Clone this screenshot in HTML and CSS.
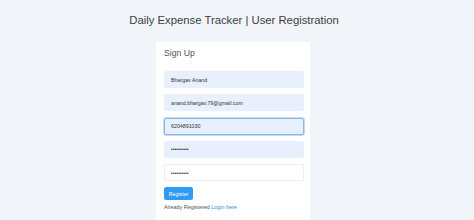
FILE: index.html
```html
<!DOCTYPE html>
<html lang="en">
<head>
  <meta charset="UTF-8">
  <meta name="viewport" content="width=device-width, initial-scale=1.0">
  <title>Daily Expense Tracker | User Registration</title>
  <link rel="stylesheet" href="styles.css">
</head>
<body>
  <h1 class="page-title">Daily Expense Tracker | User Registration</h1>
  <div class="wrap">
    <div class="card">
      <h2 class="card-title">Sign Up</h2>
      <form class="form">
        <input type="text" class="field filled" value="Bhargav Anand">
        <input type="email" class="field filled" value="anand.bhargav.79@gmail.com">
        <input type="text" class="field filled focused" value="6204891030">
        <input type="password" class="field filled" value="1234567890">
        <input type="password" class="field" value="1234567890">
        <button type="button" class="button">Register</button>
      </form>
      <p class="note">Already Registered <a href="#">Login here</a></p>
    </div>
  </div>
</body>
</html>
```

FILE: styles.css
```css
/* 기본 설정 */
:root {
  --background-color: #f1f4f8;
  --primary-color: #2f9bf4;
  --link-color: #2d8ae6;
  --text-color: #444;
}

body {
  font-family: 'Liberation Sans', Arial, sans-serif;
  margin: 0;
  padding: 0;
  background-color: var(--background-color);
  color: var(--text-color);
  overflow: hidden;
}

.page-title {
  font-size: 11.3px;
  font-weight: normal;
  text-align: center;
  margin: 13px 0 0;
  padding-right: 6px;
  line-height: 15px;
  color: #3d3d3d;
}

.wrap {
  display: flex;
  justify-content: center;
  padding-right: 8px;
  margin-top: 14px;
}

.card {
  width: 154px;
  box-sizing: border-box;
  background: #fff;
  padding: 6px 6px 20px 8px;
  min-height: 180px;
}

.card-title {
  font-size: 8.7px;
  font-weight: normal;
  color: #555;
  margin: 0 0 12px;
  line-height: 11px;
}

.form {
  display: flex;
  flex-direction: column;
  gap: 6.3px;
}

/* 입력 스타일 */
.field {
  width: 140px;
  height: 17px;
  box-sizing: border-box;
  border: 1px solid #eaeef2;
  border-radius: 2px;
  padding: 0 6px;
  font-family: inherit;
  font-size: 5.3px;
  color: #333;
  background: #fff;
  outline: none;
}

.field.filled {
  background: #e8f0fe;
  border-color: #e8f0fe;
}

.field.focused {
  border-color: #86b7e8;
  box-shadow: 0 0 0 1px #c4dcf5;
}

.field[type="password"] {
  font-size: 5px;
  letter-spacing: 0;
}

.button {
  align-self: flex-start;
  width: 29px;
  height: 13px;
  margin-top: 0;
  padding: 0;
  border: none;
  border-radius: 2px;
  background-color: var(--primary-color);
  color: #fff;
  font-family: inherit;
  font-size: 5.3px;
}

.note {
  font-size: 5.4px;
  margin: 4px 0 0;
  color: #555;
}

.note a {
  color: var(--link-color);
  text-decoration: none;
}
```
